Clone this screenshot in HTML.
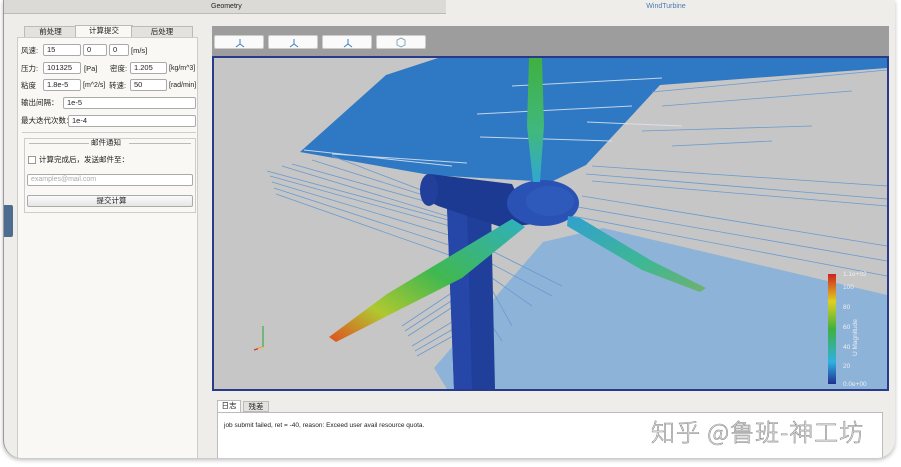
<!DOCTYPE html><html><head><meta charset="utf-8"><style>
*{box-sizing:border-box;margin:0;padding:0}
body{width:901px;height:467px;background:#fff;font-family:"Liberation Sans","Noto Sans CJK SC",sans-serif;font-size:8px;color:#222;position:relative;overflow:hidden}
.win{position:absolute;left:3px;top:0;width:892px;height:458px;background:#efedea;border-radius:0 0 18px 18px;box-shadow:0 2px 4px #bbb;overflow:hidden;border-left:1px solid #999}
.a{position:absolute}
.inp{position:absolute;background:#fff;border:1px solid #aaa;border-radius:2px;height:12px;font-size:7.5px;padding-left:3px;line-height:10px}
.lb{position:absolute;font-size:7.5px;line-height:12px}
.tab{position:absolute;top:26px;height:12px;border:1px solid #bbb;background:#e4e2df;font-size:7.5px;text-align:center;line-height:10px}
.tb{position:absolute;top:35px;width:50px;height:14px;background:#fafafa;border:1px solid #ccc;border-radius:2px}
</style></head><body>
<div class="win">
 <div class="a" style="left:0;top:0;width:442px;height:14px;background:#dcdad6;border-bottom:1px solid #bbb;font-size:7px;line-height:14px;padding-left:207px">Geometry</div>
 <div class="a" style="left:442px;top:0;width:440px;height:14px;font-size:7px;line-height:14px;text-align:center;color:#4a7ab0">WindTurbine</div>
 <div class="tab" style="left:20px;width:53px">前处理</div>
 <div class="tab" style="left:71px;width:58px;background:#faf8f5;border-bottom:none;top:25px;height:13px">计算提交</div>
 <div class="tab" style="left:127px;width:62px">后处理</div>
 <div class="a" style="left:13px;top:37px;width:181px;height:425px;border:1px solid #ccc;background:#faf8f5"></div>
 <div class="lb" style="left:17px;top:45px">风速:</div>
 <div class="inp" style="left:39px;top:44px;width:38px">15</div>
 <div class="inp" style="left:79px;top:44px;width:24px">0</div>
 <div class="inp" style="left:105px;top:44px;width:20px">0</div>
 <div class="lb" style="left:127px;top:45px">[m/s]</div>
 <div class="lb" style="left:17px;top:63px">压力:</div>
 <div class="inp" style="left:39px;top:62px;width:38px">101325</div>
 <div class="lb" style="left:80px;top:63px">[Pa]</div>
 <div class="lb" style="left:106px;top:63px">密度:</div>
 <div class="inp" style="left:126px;top:62px;width:37px">1.205</div>
 <div class="lb" style="left:165px;top:63px;font-size:7px">[kg/m^3]</div>
 <div class="lb" style="left:17px;top:80px">粘度</div>
 <div class="inp" style="left:39px;top:79px;width:38px">1.8e-5</div>
 <div class="lb" style="left:79px;top:80px;font-size:7px">[m^2/s]</div>
 <div class="lb" style="left:105px;top:80px">转速:</div>
 <div class="inp" style="left:126px;top:79px;width:37px">50</div>
 <div class="lb" style="left:165px;top:80px;font-size:7px">[rad/min]</div>
 <div class="lb" style="left:17px;top:97px">输出间隔：</div>
 <div class="inp" style="left:59px;top:97px;width:133px">1e-5</div>
 <div class="lb" style="left:17px;top:115px">最大迭代次数：</div>
 <div class="inp" style="left:64px;top:115px;width:128px">1e-4</div>
 <div class="a" style="left:18px;top:132px;width:174px;height:1px;background:#ccc"></div>
 <div class="a" style="left:20px;top:138px;width:172px;height:75px;border:1px solid #ccc"></div>
 <div class="a" style="left:25px;top:143px;width:60px;height:1px;background:#bbb"></div>
 <div class="a" style="left:125px;top:143px;width:62px;height:1px;background:#bbb"></div>
 <div class="lb" style="left:87px;top:137px">邮件通知</div>
 <div class="a" style="left:24px;top:156px;width:8px;height:8px;border:1px solid #999;background:#fff"></div>
 <div class="lb" style="left:35px;top:154px">计算完成后，发送邮件至：</div>
 <div class="inp" style="left:23px;top:174px;width:166px;color:#aaa;font-size:7px">examples@mail.com</div>
 <div class="inp" style="left:23px;top:195px;width:166px;text-align:center;background:linear-gradient(#fafafa,#e6e6e6)">提交计算</div>
 <div class="a" style="left:0px;top:205px;width:9px;height:32px;background:#4d6d90;border-radius:0 2px 2px 0"></div>
 <div class="a" style="left:208px;top:26px;width:677px;height:30px;background:#9d9d9d"></div>
 <div class="tb" style="left:210px"></div><div class="tb" style="left:264px"></div><div class="tb" style="left:318px"></div><div class="tb" style="left:372px"></div>
 <svg class="a" style="left:208px;top:35px" width="230" height="14" stroke="#3b7cc0" fill="none" stroke-width="1">
  <path d="M28 4v5l-4 3M28 9l4 3"/><path d="M82 4v5l-4 3M82 9l4 3"/><path d="M136 4v5l-4 3M136 9l4 3"/><path d="M189 3l4 2v5l-4 2-4-2V5z" stroke="#8ab"/>
 </svg>
 <svg class="a" style="left:208px;top:56px" width="677" height="335" viewBox="0 0 677 335">
  <defs>
  <linearGradient id="b1" x1="0" y1="1" x2="1" y2="0"><stop offset="0" stop-color="#e05020"/><stop offset=".25" stop-color="#b0c830"/><stop offset=".55" stop-color="#40b850"/><stop offset="1" stop-color="#30b0c0"/></linearGradient>
  <linearGradient id="b2" x1="0" y1="0" x2="0" y2="1"><stop offset="0" stop-color="#40b040"/><stop offset=".6" stop-color="#40b880"/><stop offset="1" stop-color="#30a8d0"/></linearGradient>
  <linearGradient id="b3" x1="0" y1="0" x2="1" y2="1"><stop offset="0" stop-color="#30a0d0"/><stop offset=".6" stop-color="#40b890"/><stop offset="1" stop-color="#70b070"/></linearGradient>
  <linearGradient id="lg" x1="0" y1="1" x2="0" y2="0"><stop offset="0" stop-color="#203090"/><stop offset=".2" stop-color="#30b0e0"/><stop offset=".5" stop-color="#40b040"/><stop offset=".75" stop-color="#e0d020"/><stop offset="1" stop-color="#d02020"/></linearGradient></defs>
  <rect width="677" height="335" fill="#2a3a8a"/>
  <rect x="2" y="2" width="673" height="331" fill="#c6c6c6"/>
  <polygon points="174,19 226,2 675,2 675,12 448,29 374,109 339,126 218,119 88,96" fill="#2f78c4"/>
  <polygon points="222,312 331,186 391,172 675,239 675,333 235,333" fill="#8db3d8"/>
  <g stroke="#6a9ad0" stroke-width=".8" fill="none">
   <path d="M55 115L240 165M58 120L245 172M60 126L240 180M62 132L240 190M64 138L240 200M70 110L235 160M80 108L230 150M100 104L230 145M120 100L225 140"/>
   <path d="M190 270L250 230M193 275L250 238M196 280L250 245M200 290L250 260M203 295L250 268M205 300L250 275"/>
   <path d="M374 118L675 143M380 125L675 150M370 140L675 190M360 150L675 205M360 160L675 220M380 110L675 130"/>
   <path d="M440 36L675 14M450 50L640 35M430 75L600 70M460 90L560 85"/>
   <path d="M270 215L320 250M275 225L300 270M260 240L290 285M265 200L340 240M270 190L350 230"/>
  </g>
  <g stroke="#dde6f0" stroke-width="1" opacity=".85"><path d="M300 30L450 22M265 58L420 50M268 81L400 85M120 98L255 107M92 94L240 110M375 66L470 70"/></g>
  <polygon points="235,150 279,150 283,333 242,333" fill="#1f3f9a"/>
  <polygon points="235,150 255,150 260,333 242,333" fill="#2646a8"/>
  <path d="M218,118 L300,128 L320,168 L292,172 L226,150 Q206,140 212,124 Z" fill="#1d3a92"/>
  <ellipse cx="217" cy="134" rx="9" ry="16" fill="#223f9c"/>
  <ellipse cx="331" cy="147" rx="36" ry="23" fill="#2a52b4"/>
  <ellipse cx="338" cy="145" rx="24" ry="15" fill="#3060c0" opacity=".6"/>
  <polygon points="317,2 330,2 332,70 328,126 321,126 315,70" fill="url(#b2)"/>
  <polygon points="356,160 368,162 440,205 494,232 488,236 430,214 355,170" fill="url(#b3)"/>
  <polygon points="300,163 313,171 250,222 124,286 117,281 175,238" fill="url(#b1)"/>
  <rect x="616" y="218" width="8" height="110" fill="url(#lg)"/>
  <g fill="#eee" font-size="6.5" font-family="Liberation Sans"><text x="631" y="220">1.1e+02</text><text x="631" y="233">100</text><text x="631" y="253">80</text><text x="631" y="273">60</text><text x="631" y="293">40</text><text x="631" y="312">20</text><text x="631" y="330">0.0e+00</text>
  <text transform="translate(645 300) rotate(-90)" font-size="6.5">U Magnitude</text></g>
  <g stroke-width="1.2"><path d="M51 291V270" stroke="#4a4"/><path d="M51 291L42 294" stroke="#c33"/><path d="M51 291L46 293" stroke="#fc3"/></g>
 </svg>
 <div class="tab" style="left:213px;top:400px;width:24px;background:#fff;border-bottom:none">日志</div>
 <div class="tab" style="left:239px;top:401px;width:26px;height:11px">残差</div>
 <div class="a" style="left:213px;top:412px;width:666px;height:50px;background:#fff;border:1px solid #bbb"></div>
 <div class="lb" style="left:220px;top:420px;font-size:6.5px">job submit failed, ret = -40, reason: Exceed user avail resource quota.</div>
 <div class="a" style="left:647px;top:413px;font-size:24px;color:#fff;-webkit-text-stroke:.6px #888;letter-spacing:1px;font-family:'Noto Sans CJK SC',sans-serif;font-weight:300">知乎 @鲁班-神工坊</div>
</div>
</body></html>
